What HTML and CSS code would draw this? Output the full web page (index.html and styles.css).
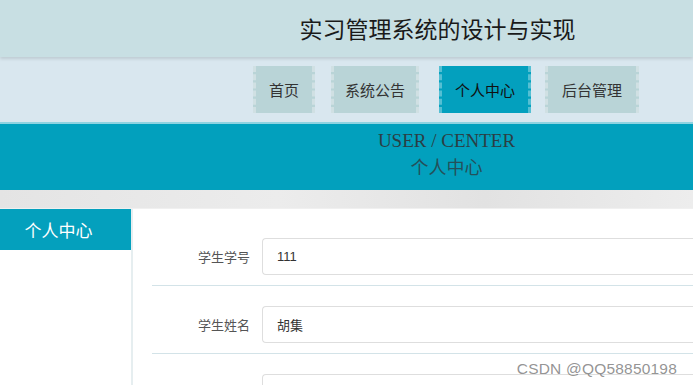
FILE: index.html
```html
<!DOCTYPE html>
<html lang="zh-CN">
<head>
    <meta charset="UTF-8">
    <meta name="viewport" content="width=device-width, initial-scale=1.0">
    <title>实习管理系统的设计与实现</title>
    <link rel="stylesheet" href="styles.css">
</head>
<body>
    <header class="top">
        <h1>实习管理系统的设计与实现</h1>
    </header>
    <nav class="menu">
        <a href="#">首页</a>
        <a href="#" class="wide">系统公告</a>
        <a href="#" class="wide active">个人中心</a>
        <a href="#" class="wide last">后台管理</a>
    </nav>

    <div class="banner">
        <p class="en">USER / CENTER</p>
        <p class="cn">个人中心</p>
    </div>
    <div class="strip"></div>

    <div class="page">
        <aside class="side">
            <div class="side-title">个人中心</div>
        </aside>
        <main class="content">
            <div class="row">
                <label for="xh">学生学号</label>
                <input type="text" id="xh" value="111">
            </div>
            <div class="row">
                <label for="xm">学生姓名</label>
                <input type="text" id="xm" value="胡集">
            </div>
            <div class="row">
                <label for="xb"></label>
                <input type="text" id="xb" value="">
            </div>
        </main>
    </div>

    <div class="mark">CSDN @QQ58850198</div>
</body>
</html>
```

FILE: styles.css
```css
/* Basic Reset */
* {
    margin: 0;
    padding: 0;
    box-sizing: border-box;
}

body {
    font-family: "Microsoft YaHei", "Noto Sans CJK SC", sans-serif;
    background-color: #fff;
    color: #333;
    height: 385px;
    overflow: hidden;
}

.top {
    height: 57px;
    background-color: #c8dfe3;
    box-shadow: 0 2px 3px rgba(0, 0, 0, 0.12);
    position: relative;
    z-index: 1;
    padding-left: 182px;
    text-align: center;
}

.top h1 {
    font-size: 23px;
    font-weight: normal;
    color: #1a1a1a;
    line-height: 57px;
}

.menu {
    height: 65px;
    background-color: #d9e7ef;
    display: flex;
    justify-content: flex-end;
    align-items: center;
    padding-right: 54px;
}

.menu a {
    height: 47px;
    line-height: 47px;
    padding: 0 13px;
    margin-left: 16px;
    font-size: 15px;
    color: #333;
    text-decoration: none;
    background-color: #b9d4d7;
    border-left: 3px dashed #d0e0e3;
    border-right: 3px dashed #d0e0e3;
}

.menu a.wide {
    padding: 0 11px;
}

.menu a.active {
    margin-left: 20px;
    padding: 0 13px;
    background-color: #03a0be;
    color: #111;
    border-color: #55bfd3;
}

.menu a.last {
    margin-left: 14px;
    padding: 0 14px;
}

.banner {
    height: 68px;
    background-color: #02a0bd;
    border-top: 2px solid #8fd3e1;
    text-align: center;
    padding-left: 200px;
    font-family: "Liberation Serif", "Noto Sans CJK SC", serif;
}

.banner .en {
    font-size: 19px;
    color: #2b3e44;
    padding-top: 6px;
    line-height: 22px;
}

.banner .cn {
    font-size: 18px;
    color: #24505a;
    line-height: 32px;
}

.strip {
    height: 19px;
    background: linear-gradient(90deg, #e4e4e4, #ececec 40%, #e2e2e2 70%, #ededed);
    border-bottom: 1px solid #f0f0f0;
}

.page {
    display: flex;
}

.side {
    width: 133px;
    border-right: 2px solid #e6eef0;
    height: 180px;
}

.side-title {
    height: 41px;
    line-height: 41px;
    background-color: #04a0bd;
    color: #fff;
    font-size: 17px;
    text-align: center;
    padding-right: 14px;
}

.content {
    flex: 1;
    padding: 9px 0 0 19px;
}

.row {
    display: flex;
    align-items: center;
    padding: 20px 0 10px;
    border-bottom: 1px solid #d3e3e8;
}

.row label {
    width: 110px;
    text-align: right;
    font-size: 13px;
    color: #555;
    padding-right: 12px;
}

.row input {
    flex: 1;
    height: 37px;
    border: 1px solid #dedede;
    border-right: none;
    border-radius: 4px 0 0 4px;
    padding: 0 14px;
    font-size: 13px;
    color: #333;
    font-family: "Liberation Sans", "Noto Sans CJK SC", sans-serif;
}

.mark {
    position: absolute;
    right: 16px;
    bottom: 7px;
    font-family: "Liberation Sans", sans-serif;
    font-size: 15.5px;
    color: rgba(120, 120, 120, 0.8);
    letter-spacing: 0.2px;
}
```
